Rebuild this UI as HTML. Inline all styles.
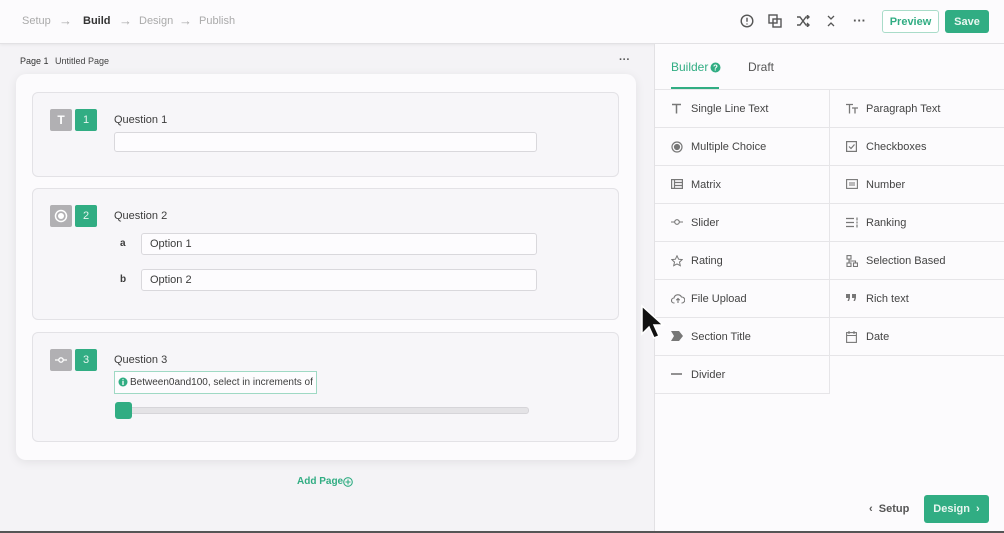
<!DOCTYPE html>
<html><head><meta charset="utf-8"><style>
*{box-sizing:border-box;margin:0;padding:0}
body{width:1004px;height:533px;overflow:hidden;background:#f4f3f6;font-family:"Liberation Sans",sans-serif;color:#3c3c3c;position:relative;font-size:11px}
.a{position:absolute}
.hdr{left:0;top:0;width:1004px;height:44px;background:#fcfbfd;border-bottom:1px solid #e2e1e4;box-shadow:0 1px 3px rgba(0,0,0,.06)}
.g{color:#aaa}
.card{left:16px;top:74px;width:620px;height:386px;background:#fcfbfd;border-radius:10px;box-shadow:0 2px 10px rgba(0,0,0,.08)}
.q{background:#f7f6f9;border:1px solid #e3e2e6;border-radius:6px;left:32px;width:587px}
.ic{width:22px;height:22px;border-radius:2px;background:#b1b0b3;color:#fff;text-align:center;line-height:22px;font-weight:bold;font-size:12px}
.num{width:22px;height:22px;border-radius:2px;background:#31ad83;color:#e6f5ef;text-align:center;line-height:22px;font-size:11px}
.inp{background:#fdfcfe;border:1px solid #d9d8dc;border-radius:3px;height:20px;padding-left:8px;line-height:18px;font-size:11px}
.rp{left:654px;top:44px;width:350px;height:489px;background:#fcfbfd;border-left:1px solid #e2e1e4}
.cell{position:absolute;width:175px;height:38px;border-bottom:1px solid #e6e5e8;border-right:1px solid #e6e5e8;line-height:38px;padding-left:36px;font-size:11px;color:#444}
.cell svg{position:absolute;left:16px;top:13px}
.btn{border-radius:3px;text-align:center;font-weight:bold;font-size:11px}
</style></head><body>
<div class="a hdr"></div>
<div class="a g" style="left:22px;top:15px;font-size:11px">Setup</div>
<div class="a g" style="left:59px;top:13px;font-size:13px">→</div>
<div class="a" style="left:83px;top:15px;font-weight:bold;color:#333">Build</div>
<div class="a g" style="left:119px;top:13px;font-size:13px">→</div>
<div class="a g" style="left:139px;top:15px">Design</div>
<div class="a g" style="left:179px;top:13px;font-size:13px">→</div>
<div class="a g" style="left:199px;top:15px">Publish</div>
<svg class="a" style="left:740px;top:14px" width="14" height="14" viewBox="0 0 14 14" fill="none" stroke="#555" stroke-width="1.4"><circle cx="7" cy="7" r="5.8"/><path d="M7 3.8v4M7 9.5v1"/></svg>
<svg class="a" style="left:768px;top:14px" width="14" height="14" viewBox="0 0 14 14" fill="none" stroke="#555" stroke-width="1.4"><rect x="1" y="1" width="8" height="8"/><rect x="5" y="5" width="8" height="8"/></svg>
<svg class="a" style="left:796px;top:15px" width="14" height="12" viewBox="0 0 14 12" fill="none" stroke="#555" stroke-width="1.4"><path d="M1 2h3l6 8h3M1 10h3l6-8h3M11 0l2 2-2 2M11 8l2 2-2 2"/></svg>
<svg class="a" style="left:826px;top:15px" width="10" height="12" viewBox="0 0 10 12" fill="none" stroke="#555" stroke-width="1.3"><path d="M2 1l3 3 3-3M2 11l3-3 3 3"/></svg>
<div class="a" style="left:853px;top:13px;color:#555;font-size:13px;font-weight:bold">···</div>
<div class="a btn" style="left:882px;top:10px;width:57px;height:23px;border:1px solid #a9dcc9;color:#31ad83;line-height:21px;background:#fff;padding-top:1px">Preview</div>
<div class="a btn" style="left:945px;top:10px;width:44px;height:23px;background:#31ad83;color:#eaf7f1;line-height:23px;padding-top:1px">Save</div>

<div class="a" style="left:20px;top:56px;font-size:9px;color:#333">Page 1</div>
<div class="a" style="left:55px;top:56px;font-size:9px;color:#444">Untitled Page</div>
<div class="a" style="left:619px;top:54px;font-size:11px;font-weight:bold;color:#555">···</div>

<div class="a card"></div>
<div class="a q" style="top:92px;height:85px"></div>
<div class="a ic" style="left:50px;top:109px">T</div>
<div class="a num" style="left:75px;top:109px">1</div>
<div class="a" style="left:114px;top:114px">Question 1</div>
<div class="a inp" style="left:114px;top:132px;width:423px"></div>

<div class="a q" style="top:188px;height:132px"></div>
<div class="a ic" style="left:50px;top:205px"><svg width="22" height="22"><circle cx="11" cy="11" r="5.5" fill="none" stroke="#fff" stroke-width="1.5"/><circle cx="11" cy="11" r="3" fill="#fff"/></svg></div>
<div class="a num" style="left:75px;top:205px">2</div>
<div class="a" style="left:114px;top:210px">Question 2</div>
<div class="a" style="left:120px;top:238px;font-weight:bold;font-size:10px">a</div>
<div class="a inp" style="left:141px;top:233px;width:396px;height:22px;line-height:20px">Option 1</div>
<div class="a" style="left:120px;top:274px;font-weight:bold;font-size:10px">b</div>
<div class="a inp" style="left:141px;top:269px;width:396px;height:22px;line-height:20px">Option 2</div>

<div class="a q" style="top:332px;height:110px"></div>
<div class="a ic" style="left:50px;top:349px"><svg width="22" height="22" fill="none" stroke="#fff" stroke-width="1.3"><path d="M5 11h4M13 11h4"/><circle cx="11" cy="11" r="2.2"/></svg></div>
<div class="a num" style="left:75px;top:349px">3</div>
<div class="a" style="left:114px;top:354px">Question 3</div>
<div class="a" style="left:114px;top:371px;width:203px;height:23px;border:1px solid #9fd9c4;background:#fdfcfe;line-height:21px;padding-left:15px;font-size:10px;white-space:nowrap;overflow:hidden">Between0and100, select in increments of</div>
<svg class="a" style="left:118px;top:377px" width="10" height="10"><circle cx="5" cy="5" r="4.5" fill="#31ad83"/><path d="M5 4v4M5 2.2v1" stroke="#fff" stroke-width="1.3"/></svg>
<div class="a" style="left:118px;top:407px;width:411px;height:7px;background:#e4e3e6;border:1px solid #d6d5d9;border-radius:3px"></div>
<div class="a" style="left:115px;top:402px;width:17px;height:17px;background:#31ad83;border-radius:3px"></div>

<div class="a" style="left:297px;top:476px;color:#31ad83;font-weight:bold;font-size:10px">Add Page</div>
<svg class="a" style="left:343px;top:477px" width="10" height="10" fill="none" stroke="#31ad83" stroke-width="1.1"><circle cx="5" cy="5" r="4.3"/><path d="M5 2.5v5M2.5 5h5"/></svg>

<div class="a rp">
<div class="a" style="left:16px;top:16px;font-size:12px;color:#31ad83">Builder</div>
<svg class="a" style="left:55px;top:18px" width="11" height="11"><circle cx="5.5" cy="5.5" r="5" fill="#31ad83"/><text x="5.5" y="8.5" font-size="8" fill="#fff" text-anchor="middle" font-family="Liberation Sans" font-weight="bold">?</text></svg>
<div class="a" style="left:16px;top:43px;width:48px;height:2px;background:#31ad83"></div>
<div class="a" style="left:93px;top:16px;font-size:12px;color:#555">Draft</div>
<div class="a" style="left:0;top:45px;width:350px;border-top:1px solid #e6e5e8"></div>
<div style="position:absolute;left:0;top:46px">
<div class="cell" style="left:0;top:0"><svg width="11" height="11" fill="none" stroke="#777" stroke-width="1.5"><path d="M1 1.5h9M5.5 1.5v9"/></svg>Single Line Text</div>
<div class="cell" style="left:175px;top:0"><svg width="13" height="11" fill="none" stroke="#777" stroke-width="1.3"><path d="M0 1.5h7M3.5 1.5v9M6 5h6M9 5v5.5"/></svg>Paragraph Text</div>
<div class="cell" style="left:0;top:38px"><svg width="12" height="12" fill="none" stroke="#777" stroke-width="1.2"><circle cx="6" cy="6" r="5"/><circle cx="6" cy="6" r="2.5" fill="#777"/></svg>Multiple Choice</div>
<div class="cell" style="left:175px;top:38px"><svg width="11" height="11" fill="none" stroke="#777" stroke-width="1.2"><rect x=".6" y=".6" width="9.8" height="9.8"/><path d="M3 5.5l2 2 3.5-4"/></svg>Checkboxes</div>
<div class="cell" style="left:0;top:76px"><svg width="12" height="10" fill="none" stroke="#777" stroke-width="1.2"><rect x=".6" y=".6" width="10.8" height="8.8"/><path d="M3.5 1v8M3.5 3.5h8M3.5 6.5h8"/></svg>Matrix</div>
<div class="cell" style="left:175px;top:76px"><svg width="12" height="10" fill="none" stroke="#777" stroke-width="1.1"><rect x=".6" y=".6" width="10.8" height="8.8"/><path d="M3 4h6M3 6h6"/></svg>Number</div>
<div class="cell" style="left:0;top:114px"><svg width="12" height="10" fill="none" stroke="#777" stroke-width="1.1"><path d="M0 5h3.5M8.5 5h3.5"/><circle cx="6" cy="5" r="2.3"/></svg>Slider</div>
<div class="cell" style="left:175px;top:114px"><svg width="12" height="11" fill="none" stroke="#777" stroke-width="1.2"><path d="M0 1.5h8M0 5.5h8M0 9.5h8M11 0.5v3M11 4.5v2M11 7.5v3"/></svg>Ranking</div>
<div class="cell" style="left:0;top:152px"><svg width="12" height="12" fill="none" stroke="#777" stroke-width="1"><path d="M6 .8l1.6 3.4 3.6.4-2.7 2.5.8 3.6L6 8.9 2.7 10.7l.8-3.6L.8 4.6l3.6-.4z"/></svg>Rating</div>
<div class="cell" style="left:175px;top:152px"><svg width="12" height="12" fill="none" stroke="#777" stroke-width="1.1"><rect x="1" y=".6" width="4" height="3.5"/><rect x="1" y="8" width="4" height="3.5"/><rect x="7.5" y="8" width="4" height="3.5"/><path d="M3 4v4M3 6h6.5v2"/></svg>Selection Based</div>
<div class="cell" style="left:0;top:190px"><svg width="14" height="11" fill="none" stroke="#777" stroke-width="1.1"><path d="M3.5 10H3a2.5 2.5 0 010-5 4 4 0 017.5-1A3 3 0 0111 10h-.5"/><path d="M7 10V5.5M5.3 7.2L7 5.5l1.7 1.7"/></svg>File Upload</div>
<div class="cell" style="left:175px;top:190px"><svg width="11" height="9" fill="#777"><rect x="0" y="1" width="4" height="4"/><rect x="6" y="1" width="4" height="4"/><path d="M2.5 5L1.5 8h1.5L4 5M8.5 5L7.5 8H9L10 5"/></svg>Rich text</div>
<div class="cell" style="left:0;top:228px"><svg width="12" height="10" fill="#777"><path d="M0 0h8l4 5-4 5H0l3-5z"/></svg>Section Title</div>
<div class="cell" style="left:175px;top:228px"><svg width="11" height="12" fill="none" stroke="#777" stroke-width="1.1"><rect x=".6" y="1.6" width="9.8" height="9.8"/><path d="M.6 4.5h9.8M3 0v3M8 0v3" /></svg>Date</div>
<div class="cell" style="left:0;top:266px"><svg width="11" height="10" fill="none" stroke="#777" stroke-width="1.6"><path d="M0 5h11"/></svg>Divider</div>
</div>
</div>

<div class="a" style="left:869px;top:503px;font-size:11px;font-weight:bold;color:#555">‹ &nbsp;Setup</div>
<div class="a btn" style="left:924px;top:495px;width:65px;height:28px;background:#31ad83;color:#e8f6f0;line-height:28px">Design &nbsp;›</div>
<div class="a" style="left:0;top:531px;width:1004px;height:2px;background:#555"></div>

<svg class="a" style="left:640px;top:304px" width="24" height="36" viewBox="0 0 24 36"><path d="M2 2v28l7-7 5 11 5-2-5-11h9z" fill="#111" stroke="#fff" stroke-width="1.5"/></svg>
</body></html>
